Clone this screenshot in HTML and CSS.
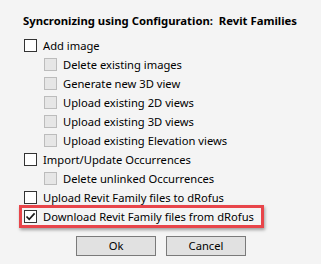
FILE: index.html
```html
<!DOCTYPE html>
<html>
<head>
<meta charset="utf-8">
<link rel="stylesheet" href="styles.css">
</head>
<body>
<div class="dialog">
  <div class="title">Syncronizing using Configuration:&nbsp; Revit Families</div>
  <div class="list">
    <div class="row"><span class="box"></span><span class="label">Add image</span></div>
    <div class="row sub"><span class="box dis"></span><span class="label">Delete existing images</span></div>
    <div class="row sub"><span class="box dis"></span><span class="label">Generate new 3D view</span></div>
    <div class="row sub"><span class="box dis"></span><span class="label">Upload existing 2D views</span></div>
    <div class="row sub"><span class="box dis"></span><span class="label">Upload existing 3D views</span></div>
    <div class="row sub"><span class="box dis"></span><span class="label">Upload existing Elevation views</span></div>
    <div class="row"><span class="box"></span><span class="label">Import/Update Occurrences</span></div>
    <div class="row sub"><span class="box dis"></span><span class="label">Delete unlinked Occurrences</span></div>
    <div class="row"><span class="box"></span><span class="label">Upload Revit Family files to dRofus</span></div>
    <div class="row hl"><span class="box checked"><svg viewBox="0 0 11 11" width="11" height="11"><path d="M1.5 5.5 L4.2 8.3 L9.6 2.4" fill="none" stroke="#1a1a1a" stroke-width="1.7"/></svg></span><span class="label">Download Revit Family files from dRofus</span></div>
  </div>
  <div class="buttons">
    <div class="btn">Ok</div>
    <div class="btn">Cancel</div>
  </div>
</div>
</body>
</html>
```
FILE: styles.css
```css
html, body {
  margin: 0;
  padding: 0;
  background: #f4f4f4;
}
body {
  width: 321px;
  height: 264px;
  overflow: hidden;
  font-family: "Noto Sans", "DejaVu Sans", sans-serif;
  font-size: 11.2px;
  color: #000;
}
.dialog {
  display: flex;
  flex-direction: column;
}
.title {
  font-weight: bold;
  font-size: 11.3px;
  padding: 12px 0 0 23px;
  height: 24px;
  line-height: 18px;
  box-sizing: border-box;
}
.list {
  display: flex;
  flex-direction: column;
  padding-top: 12px;
}
.row {
  display: flex;
  align-items: center;
  height: 19px;
  padding-left: 24px;
  position: relative;
}
.row.sub {
  padding-left: 44px;
}
.box {
  width: 13px;
  height: 13px;
  box-sizing: border-box;
  border: 1px solid #333;
  background: #fff;
  flex: none;
  display: flex;
  align-items: center;
  justify-content: center;
}
.box.dis {
  border-color: #bcbcbc;
  background: #e6e6e6;
}
.label {
  margin-left: 6px;
  white-space: nowrap;
  line-height: 16px;
}
.row.hl::before {
  content: "";
  position: absolute;
  left: 19px;
  top: -2px;
  width: 245px;
  height: 23px;
  box-sizing: border-box;
  border: 3px solid #e8454a;
  box-shadow: 1px 2px 3px rgba(0,0,0,0.35);
}
.buttons {
  display: flex;
  justify-content: center;
  gap: 10px;
  padding-top: 10px;
  padding-left: 1px;
}
.btn {
  width: 80px;
  height: 20px;
  box-sizing: border-box;
  border: 1px solid #7a7a7a;
  background: #e1e1e1;
  display: flex;
  align-items: center;
  justify-content: center;
  line-height: 16px;
}
```
